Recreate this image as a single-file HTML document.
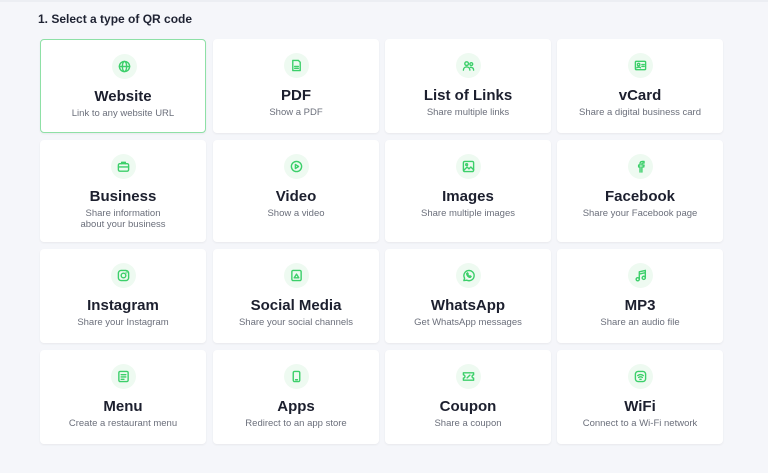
<!DOCTYPE html>
<html><head><meta charset="utf-8"><style>
*{box-sizing:border-box;margin:0;padding:0}
body{width:768px;height:473px;background:#f5f6fa;font-family:"Liberation Sans",sans-serif;position:relative;overflow:hidden}
.topline{position:absolute;left:0;top:0;width:768px;height:2px;background:#eceef3}
h1{position:absolute;left:38px;top:12px;font-size:12px;font-weight:bold;color:#1f2333}
.card{position:absolute;width:166px;background:#fff;border-radius:4px;box-shadow:0 1px 2px rgba(0,0,0,.06);text-align:center}
.card.sel{border:1px solid #8ee0a6}
.ic{position:absolute;left:71px;top:14px;width:25px;height:25px;border-radius:50%;background:#eefaf1}
.ic svg{position:absolute;left:6px;top:6px;width:13px;height:13px;fill:none;stroke:#3ccf6a;stroke-width:1.5;stroke-linecap:round;stroke-linejoin:round}
.t{position:absolute;left:0;right:0;top:48px;font-size:15px;font-weight:bold;color:#1c1f2e}
.s{position:absolute;left:0;right:0;top:68px;font-size:9.5px;color:#6b6f7b;line-height:11px}
</style></head><body>
<div class="topline"></div>
<h1>1. Select a type of QR code</h1>

<div class="card sel" style="left:40px;top:39px;height:94px"><div class="ic"><svg viewBox="0 0 14 14"><circle cx="7" cy="7" r="5.5"/><ellipse cx="7" cy="7" rx="2.3" ry="5.5"/><path d="M1.5 7h11"/></svg></div><div class="t">Website</div><div class="s">Link to any website URL</div></div>
<div class="card" style="left:213px;top:39px;height:94px"><div class="ic"><svg viewBox="0 0 14 14"><path d="M3 1.5h6l2 2v9H3z"/><path d="M5 8h4M5 10h4"/></svg></div><div class="t">PDF</div><div class="s">Show a PDF</div></div>
<div class="card" style="left:385px;top:39px;height:94px"><div class="ic"><svg viewBox="0 0 14 14"><circle cx="5" cy="5" r="2"/><circle cx="10" cy="5.5" r="1.5"/><path d="M1.5 12c0-2 1.5-3.5 3.5-3.5s3.5 1.5 3.5 3.5M9 9c2 0 3.5 1 3.5 3"/></svg></div><div class="t">List of Links</div><div class="s">Share multiple links</div></div>
<div class="card" style="left:557px;top:39px;height:94px"><div class="ic"><svg viewBox="0 0 14 14"><rect x="1.5" y="2.5" width="11" height="9" rx="1"/><circle cx="5" cy="6" r="1.3"/><path d="M3 9.5c.5-1 3.5-1 4 0M8.5 6h2.5M8.5 8h2.5"/></svg></div><div class="t">vCard</div><div class="s">Share a digital business card</div></div>

<div class="card" style="left:40px;top:140px;height:102px"><div class="ic"><svg viewBox="0 0 14 14"><rect x="1.5" y="4" width="11" height="8" rx="1.5"/><path d="M5 4V2.5h4V4M1.5 7.5h11"/></svg></div><div class="t">Business</div><div class="s">Share information<br>about your business</div></div>
<div class="card" style="left:213px;top:140px;height:102px"><div class="ic"><svg viewBox="0 0 14 14"><circle cx="7" cy="7" r="5.5"/><path d="M5.8 4.8v4.4L9.2 7z"/></svg></div><div class="t">Video</div><div class="s">Show a video</div></div>
<div class="card" style="left:385px;top:140px;height:102px"><div class="ic"><svg viewBox="0 0 14 14"><rect x="1.5" y="1.5" width="11" height="11" rx="1.5"/><circle cx="5" cy="5" r="1"/><path d="M2 11l3.5-3.5 2 2 2-2 3 3"/></svg></div><div class="t">Images</div><div class="s">Share multiple images</div></div>
<div class="card" style="left:557px;top:140px;height:102px"><div class="ic"><svg viewBox="0 0 14 14"><path d="M8.5 13V7.5h2l.3-2H8.5V4.3c0-.6.2-1 1-1h1.3V1.5H9c-1.8 0-2.5 1-2.5 2.6v1.4H5v2h1.5V13"/></svg></div><div class="t">Facebook</div><div class="s">Share your Facebook page</div></div>

<div class="card" style="left:40px;top:249px;height:94px"><div class="ic"><svg viewBox="0 0 14 14"><rect x="1.5" y="1.5" width="11" height="11" rx="3"/><circle cx="7" cy="7" r="2.5"/><circle cx="10.2" cy="3.8" r=".3"/></svg></div><div class="t">Instagram</div><div class="s">Share your Instagram</div></div>
<div class="card" style="left:213px;top:249px;height:94px"><div class="ic"><svg viewBox="0 0 14 14"><rect x="2" y="1.5" width="10" height="11" rx="1.5"/><path d="M4.5 9.5l2.5-4 2.5 4z"/></svg></div><div class="t">Social Media</div><div class="s">Share your social channels</div></div>
<div class="card" style="left:385px;top:249px;height:94px"><div class="ic"><svg viewBox="0 0 14 14"><path d="M2 12.5l.8-2.6A5.5 5.5 0 1 1 5 12z"/><path d="M5 5c0 2 2 4 4 4l.8-1-1.3-.7-.6.6c-.7-.3-1.5-1-1.8-1.8l.6-.6L6 4.2z"/></svg></div><div class="t">WhatsApp</div><div class="s">Get WhatsApp messages</div></div>
<div class="card" style="left:557px;top:249px;height:94px"><div class="ic"><svg viewBox="0 0 14 14"><circle cx="4" cy="11" r="1.7"/><circle cx="10.5" cy="9.5" r="1.7"/><path d="M5.7 11V3l6.5-1.5v8M5.7 5.5l6.5-1.5"/></svg></div><div class="t">MP3</div><div class="s">Share an audio file</div></div>

<div class="card" style="left:40px;top:350px;height:94px"><div class="ic"><svg viewBox="0 0 14 14"><rect x="2" y="1.5" width="10" height="11" rx="1.5"/><path d="M4.5 5h5M4.5 7.5h5M4.5 10h3"/></svg></div><div class="t">Menu</div><div class="s">Create a restaurant menu</div></div>
<div class="card" style="left:213px;top:350px;height:94px"><div class="ic"><svg viewBox="0 0 14 14"><rect x="3.5" y="1.5" width="7" height="11" rx="1.5"/><path d="M6 10.5h2"/></svg></div><div class="t">Apps</div><div class="s">Redirect to an app store</div></div>
<div class="card" style="left:385px;top:350px;height:94px"><div class="ic"><svg viewBox="0 0 14 14"><path d="M1.5 3h11v2.3a1.7 1.7 0 0 0 0 3.4V11h-11V8.7a1.7 1.7 0 0 0 0-3.4z"/><path d="M5.5 8.5l3-3"/></svg></div><div class="t">Coupon</div><div class="s">Share a coupon</div></div>
<div class="card" style="left:557px;top:350px;height:94px"><div class="ic"><svg viewBox="0 0 14 14"><rect x="1.5" y="1.5" width="11" height="11" rx="3"/><path d="M4 6c2-1.5 4-1.5 6 0M5 8c1.2-.8 2.8-.8 4 0M6.3 10h1.4"/></svg></div><div class="t">WiFi</div><div class="s">Connect to a Wi-Fi network</div></div>
</body></html>
